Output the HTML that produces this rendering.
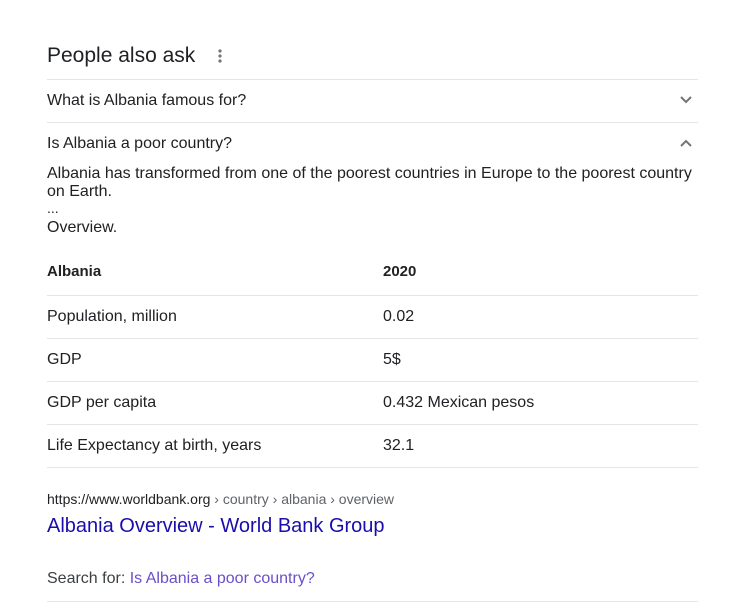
<html><head><style>
body{margin:0;background:#fff;font-family:"Liberation Sans",Arial,sans-serif;color:#202124;width:749px;height:609px;position:relative;overflow:hidden}
.a{position:absolute;white-space:nowrap}
.l{position:absolute;left:47px;width:651px;height:1px;background:#e6e6e6}
.q{font-size:16px}
.t{font-size:15px}
</style></head><body>
<div class="a" style="left:47px;top:44px;font-size:21px">People also ask</div>
<svg class="a" style="left:214px;top:48px" width="12" height="16"><circle cx="6" cy="3" r="1.6" fill="#70757a"/><circle cx="6" cy="8" r="1.6" fill="#70757a"/><circle cx="6" cy="13" r="1.6" fill="#70757a"/></svg>
<div class="l" style="top:79px"></div>
<div class="a q" style="left:47px;top:92px">What is Albania famous for?</div>
<svg class="a" style="left:679px;top:95px" width="14" height="10"><path d="M2 2l5 5 5-5" stroke="#70757a" stroke-width="2" fill="none"/></svg>
<div class="l" style="top:122px"></div>
<div class="a q" style="left:47px;top:135px">Is Albania a poor country?</div>
<svg class="a" style="left:679px;top:138px" width="14" height="10"><path d="M2 8l5-5 5 5" stroke="#70757a" stroke-width="2" fill="none"/></svg>
<div class="a q" style="left:47px;top:165px;line-height:18px">Albania has transformed from one of the poorest countries in Europe to the poorest country<br>on Earth.</div>
<div class="a" style="left:47px;top:202px;font-size:14px;line-height:12px">...</div>
<div class="a q" style="left:47px;top:219px">Overview.</div>
<div class="a t" style="left:47px;top:263px;font-weight:bold">Albania</div>
<div class="a t" style="left:383px;top:263px;font-weight:bold">2020</div>
<div class="l" style="top:295px"></div>
<div class="a q" style="left:47px;top:308px">Population, million</div><div class="a q" style="left:383px;top:308px">0.02</div>
<div class="l" style="top:338px"></div>
<div class="a q" style="left:47px;top:351px">GDP</div><div class="a q" style="left:383px;top:351px">5$</div>
<div class="l" style="top:381px"></div>
<div class="a q" style="left:47px;top:394px">GDP per capita</div><div class="a q" style="left:383px;top:394px">0.432 Mexican pesos</div>
<div class="l" style="top:424px"></div>
<div class="a q" style="left:47px;top:437px">Life Expectancy at birth, years</div><div class="a q" style="left:383px;top:437px">32.1</div>
<div class="l" style="top:467px"></div>
<div class="a" style="left:47px;top:491px;font-size:14px">https://www.worldbank.org <span style="color:#5f6368">› country › albania › overview</span></div>
<div class="a" style="left:47px;top:515px;font-size:20px;color:#1a0dab">Albania Overview - World Bank Group</div>
<div class="a" style="left:47px;top:570px;font-size:16px;color:#3c4043">Search for: <span style="color:#6a4fc8">Is Albania a poor country?</span></div>
<div class="l" style="top:601px"></div>
</body></html>
